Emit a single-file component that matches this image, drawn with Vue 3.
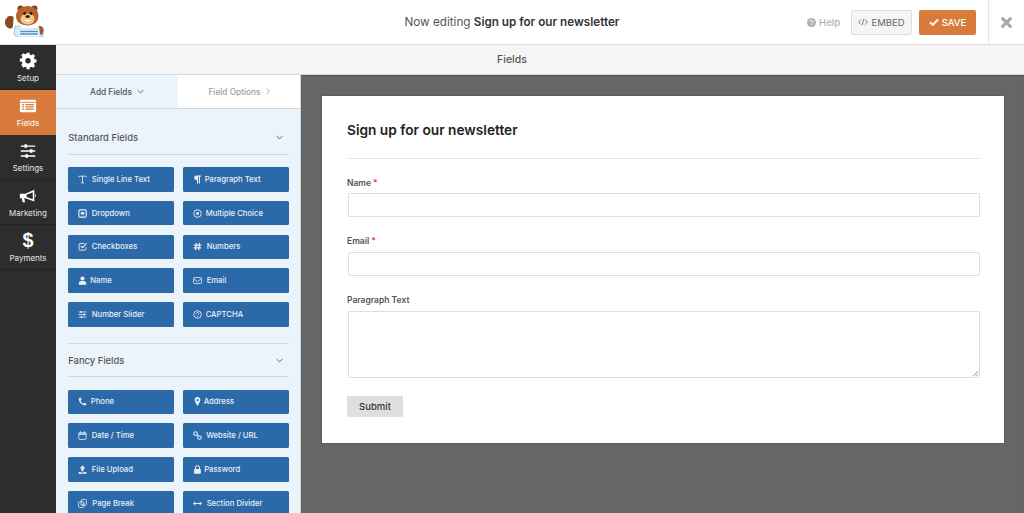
<script setup>
const navItems = [
  { label: 'Setup', icon: 'gear' },
  { label: 'Fields', icon: 'list', active: true },
  { label: 'Settings', icon: 'sliders' },
  { label: 'Marketing', icon: 'bullhorn' },
  { label: 'Payments', icon: 'dollar' },
];

const standardFields = [
  { label: 'Single Line Text', icon: 'text', nudge: 0 },
  { label: 'Paragraph Text', icon: 'para', nudge: -1.5 },
  { label: 'Dropdown', icon: 'dropdown', nudge: 0 },
  { label: 'Multiple Choice', icon: 'radio', nudge: -0.5 },
  { label: 'Checkboxes', icon: 'check', nudge: 0 },
  { label: 'Numbers', icon: 'hash', nudge: 0.5 },
  { label: 'Name', icon: 'user', nudge: -1.5 },
  { label: 'Email', icon: 'mail', nudge: 0.5 },
  { label: 'Number Slider', icon: 'slider', nudge: 0 },
  { label: 'CAPTCHA', icon: 'question', nudge: -0.5 },
];

const fancyFields = [
  { label: 'Phone', icon: 'phone', nudge: -1 },
  { label: 'Address', icon: 'pin', nudge: -2.5 },
  { label: 'Date / Time', icon: 'calendar', nudge: 0 },
  { label: 'Website / URL', icon: 'link', nudge: 0 },
  { label: 'File Upload', icon: 'upload', nudge: 0 },
  { label: 'Password', icon: 'lock', nudge: -2 },
  { label: 'Page Break', icon: 'copy', nudge: 0.5 },
  { label: 'Section Divider', icon: 'arrows', nudge: 0.5 },
];

const groups = [
  { title: 'Standard Fields', fields: standardFields },
  { title: 'Fancy Fields', fields: fancyFields },
];

const formFields = [
  { label: 'Name', required: true },
  { label: 'Email', required: true },
  { label: 'Paragraph Text', area: true },
];
</script>

<template>
  <div class="builder">
    <header class="topbar">
      <svg class="logo" viewBox="0 0 40 32" width="40" height="32">
        <path d="M10 21h24q4 0 4 3v8H13q-3 0-4-3z" fill="#d6e9f4" stroke="#9cc3da" stroke-width=".8" />
        <path d="M14 18h20l-2 5H17z" fill="#fff" />
        <rect x="14" y="25" width="20" height="6.500" fill="#f4fafd" />
        <path d="M15 26.500h18M15 29h18" stroke="#4a93cf" stroke-width="1.300" />
        <path d="M34 21c3 0 5 2 4.600 5-.3 2.500-2 4.500-3.600 3.500z" fill="#a5582a" />
        <circle cx="15.500" cy="3.500" r="3" fill="#7d4020" />
        <circle cx="29.500" cy="3.500" r="3" fill="#7d4020" />
        <path d="M11 11c0-6 5.500-10 11.500-10S33.500 5 33.500 11c0 6-4.500 9.500-11 9.500S11 17 11 11z" fill="#b8622c" />
        <ellipse cx="22.500" cy="14" rx="7" ry="5.500" fill="#f3c68e" />
        <circle cx="19.500" cy="8.500" r="1.400" fill="#2a1c14" />
        <circle cx="26" cy="8.500" r="1.400" fill="#2a1c14" />
        <ellipse cx="22.700" cy="11.500" rx="2.200" ry="1.500" fill="#3a2014" />
        <path d="M19.500 15q3.200 3 6.400 0z" fill="#fff" />
        <path d="M0 17c0-2 .8-4 1.800-3.500.5-2 1.500-2.500 2.500-2.200 1-1 2.500-.8 3 .2 1.200-.4 1.500 1 1.200 3L8 21c-.3 2-2 3.200-4 2.300S0 21 0 17z" fill="#8a4a22" />
      </svg>
      <p class="editing">Now editing <strong>Sign up for our newsletter</strong></p>
      <a class="help">
        <svg viewBox="0 0 16 16" width="9" height="9"><circle cx="8" cy="8" r="8" fill="currentColor" /><path d="M5.500 6.200c.2-3 5.200-3 5.200 0 0 2-2.500 1.800-2.500 3.400M8.200 11.200v1.600" fill="none" stroke="#fff" stroke-width="1.700" /></svg>
        Help
      </a>
      <button class="embed">
        <svg viewBox="0 0 16 12" width="10" height="8"><path d="M4.500 2 1 6l3.500 4M11.500 2 15 6l-3.500 4M9.500 1 6.500 11" fill="none" stroke="currentColor" stroke-width="1.300" /></svg>
        EMBED
      </button>
      <button class="save">
        <svg viewBox="0 0 16 12" width="10" height="8"><path d="M1.500 6.500 6 10.500 14.500 2" fill="none" stroke="currentColor" stroke-width="3" /></svg>
        SAVE
      </button>
      <div class="close">
        <svg viewBox="0 0 12 12" width="11" height="11"><path d="M1.800 1.800l8.400 8.400M10.200 1.800l-8.400 8.400" stroke="currentColor" stroke-width="3.200" stroke-linecap="round" /></svg>
      </div>
    </header>

    <div class="workspace">
      <nav class="sidenav">
        <a v-for="item in navItems" :key="item.label" class="nav-item" :class="{ active: item.active }">
          <svg viewBox="0 0 20 20" width="18" height="18" class="nav-icon">
            <template v-if="item.icon === 'gear'">
              <path d="M8.300 1h3.400l.5 2.500 1.700.7 2.200-1.400 2.400 2.400-1.400 2.200.7 1.700 2.500.5v3.400l-2.500.5-.7 1.700 1.400 2.200-2.400 2.400-2.200-1.400-1.700.7-.5 2.500H8.300l-.5-2.500-1.700-.7-2.200 1.400L1.500 16.300l1.400-2.200-.7-1.700L-.3 11.900V8.500l2.500-.5.700-1.700L1.500 4.100 3.900 1.700l2.200 1.400 1.700-.7z" transform="translate(1.200 -.2) scale(.9)" fill="currentColor" />
              <circle cx="10" cy="9.700" r="3" fill="#2d2d2d" />
            </template>
            <template v-else-if="item.icon === 'list'">
              <rect x="1" y="3" width="18" height="14" rx="1.500" fill="#fff" />
              <path d="M1.500 6h17" stroke="#d97b3c" stroke-width="1" />
              <path d="M3.500 8.500h2M7 8.500h9.500M3.500 11h2M7 11h9.500M3.500 13.500h2M7 13.500h9.500" stroke="#d97b3c" stroke-width="1.200" />
            </template>
            <template v-else-if="item.icon === 'sliders'">
              <path d="M2 4.500h16M2 10h16M2 15.500h16" stroke="currentColor" stroke-width="1.500" />
              <rect x="6" y="2.500" width="3" height="4" rx=".6" fill="currentColor" />
              <rect x="12" y="8" width="3" height="4" rx=".6" fill="currentColor" />
              <rect x="7" y="13.500" width="3" height="4" rx=".6" fill="currentColor" />
            </template>
            <template v-else-if="item.icon === 'bullhorn'">
              <path d="M1 7.500h6L17 3v13L7 12.500H5.800l1 4.500H4l-1-4.500H1z" fill="currentColor" />
              <path d="M15.300 5.800 8.500 8.500v2.600l6.800 2.600z" fill="#2d2d2d" />
              <path d="M18 7.500c1.200.5 1.200 3.500 0 4z" fill="currentColor" />
            </template>
            <template v-else>
              <text x="10" y="17" text-anchor="middle" class="dollar">$</text>
            </template>
          </svg>
          <span>{{ item.label }}</span>
        </a>
      </nav>

      <div class="main">
        <div class="subheader">Fields</div>
        <div class="content">
          <aside class="panel">
            <div class="tabs">
              <div class="tab current">
                Add Fields
                <svg viewBox="0 0 10 6" width="7" height="5"><path d="M1 1l4 4 4-4" fill="none" stroke="currentColor" stroke-width="1.300" /></svg>
              </div>
              <div class="tab">
                Field Options
                <svg viewBox="0 0 6 10" width="4" height="7"><path d="M1 1l4 4-4 4" fill="none" stroke="currentColor" stroke-width="1.300" /></svg>
              </div>
            </div>

            <section v-for="group in groups" :key="group.title" class="group">
              <div class="group-head">
                <span>{{ group.title }}</span>
                <svg viewBox="0 0 10 6" width="7" height="5"><path d="M1 1l4 4 4-4" fill="none" stroke="currentColor" stroke-width="1.300" /></svg>
              </div>
              <div class="field-grid">
                <button v-for="f in group.fields" :key="f.label" class="field-btn">
                  <svg viewBox="0 0 16 16" width="9" height="9" class="field-icon" :style="{ marginRight: f.nudge + 'px' }">
                    <path v-if="f.icon === 'text'" d="M2 2h12M8 2v12M5 14h6M1.500 2v2M14.500 2v2" fill="none" stroke="currentColor" stroke-width="1.500" />
                    <path v-else-if="f.icon === 'para'" d="M6 1h8v2h-1.500v12h-2V3H9v12H7V9H6a4 4 0 0 1 0-8z" fill="currentColor" />
                    <g v-else-if="f.icon === 'dropdown'">
                      <rect x="1.500" y="1.500" width="13" height="13" rx="2" fill="none" stroke="currentColor" stroke-width="2" />
                      <rect x="5" y="5.500" width="6" height="4.500" fill="currentColor" />
                    </g>
                    <g v-else-if="f.icon === 'radio'">
                      <circle cx="8" cy="8" r="6.700" fill="none" stroke="currentColor" stroke-width="1.600" />
                      <circle cx="8" cy="8" r="2.600" fill="currentColor" />
                    </g>
                    <g v-else-if="f.icon === 'check'">
                      <path d="M14 9v4a1.500 1.500 0 0 1-1.500 1.500h-9A1.500 1.500 0 0 1 2 13V4a1.500 1.500 0 0 1 1.500-1.500H11" fill="none" stroke="currentColor" stroke-width="1.600" />
                      <path d="M5 7l3 3 7-7.500" fill="none" stroke="currentColor" stroke-width="2" />
                    </g>
                    <path v-else-if="f.icon === 'hash'" d="M6 1.500 4.500 14.500M11.500 1.500 10 14.500M1.500 5.500h13.500M1 10.500h13.500" fill="none" stroke="currentColor" stroke-width="2.200" />
                    <g v-else-if="f.icon === 'user'">
                      <circle cx="8" cy="4.500" r="3.700" fill="currentColor" />
                      <path d="M1.500 15.500v-2.500c0-2.500 2-4 4-4h5c2 0 4 1.500 4 4v2.500z" fill="currentColor" />
                    </g>
                    <g v-else-if="f.icon === 'mail'">
                      <rect x="1" y="2.700" width="14" height="10.600" rx="1.300" fill="none" stroke="currentColor" stroke-width="1.400" />
                      <path d="M1.500 5 8 10l6.500-5" fill="none" stroke="currentColor" stroke-width="1.400" />
                    </g>
                    <g v-else-if="f.icon === 'slider'">
                      <path d="M1 3.500h14M1 8h14M1 12.500h14" stroke="currentColor" stroke-width="1.400" />
                      <rect x="4" y="1.700" width="2.400" height="3.600" fill="currentColor" />
                      <rect x="10" y="6.200" width="2.400" height="3.600" fill="currentColor" />
                      <rect x="5" y="10.700" width="2.400" height="3.600" fill="currentColor" />
                    </g>
                    <g v-else-if="f.icon === 'question'">
                      <circle cx="8" cy="8" r="6.700" fill="none" stroke="currentColor" stroke-width="1.500" />
                      <path d="M5.800 6.300c.2-2.600 4.600-2.600 4.600 0 0 1.700-2.300 1.500-2.300 3M8.100 10.500v1.700" fill="none" stroke="currentColor" stroke-width="1.500" />
                    </g>
                    <path v-else-if="f.icon === 'phone'" d="M4.500 1 1.500 2c-.5 7 5.500 13 12.500 12.500l1-3-3.500-1.500-1.500 2c-2.500-1-4.500-3-5.500-5.500l2-1.500z" fill="currentColor" />
                    <path v-else-if="f.icon === 'pin'" fill-rule="evenodd" d="M8 0a5.500 5.500 0 0 1 5 5.500C13 9 8 16 8 16S3 9 3 5.500A5 5.500 0 0 1 8 0zm0 3.500a2 2 0 1 0 0 4 2 2 0 0 0 0-4z" fill="currentColor" />
                    <g v-else-if="f.icon === 'calendar'">
                      <rect x="1.500" y="3" width="13" height="12" rx="1.300" fill="none" stroke="currentColor" stroke-width="1.400" />
                      <path d="M1.500 5.500h13" stroke="currentColor" stroke-width="2.400" />
                      <path d="M4.700.5v3M11.300.5v3" stroke="currentColor" stroke-width="1.600" />
                    </g>
                    <g v-else-if="f.icon === 'link'" fill="none" stroke="currentColor" stroke-width="1.800">
                      <circle cx="4.500" cy="4.500" r="3.200" />
                      <circle cx="11.500" cy="11.500" r="3.200" />
                      <path d="M6.500 6.500l3 3" />
                    </g>
                    <path v-else-if="f.icon === 'upload'" d="M8 .5 13 6h-3v5H6V6H3zM1 12.500h4v.8h6v-.8h4v3H1z" fill="currentColor" />
                    <g v-else-if="f.icon === 'lock'">
                      <rect x="2" y="7" width="12" height="8.500" rx="1.300" fill="currentColor" />
                      <path d="M4.500 7.500V5a3.500 3.500 0 0 1 7 0v2.500" fill="none" stroke="currentColor" stroke-width="1.800" />
                    </g>
                    <g v-else-if="f.icon === 'copy'" fill="none" stroke="currentColor" stroke-width="1.400">
                      <rect x="5.500" y="1" width="9.500" height="10" rx="1.500" />
                      <rect x="1" y="5" width="9.500" height="10" rx="1.500" />
                      <path d="M5.500 9.500l2 2 3.500-4" />
                    </g>
                    <path v-else d="M0 8l4-3.500v2.500h8V4.500L16 8l-4 3.500V9H4v2.500z" fill="currentColor" />
                  </svg>
                  {{ f.label }}
                </button>
              </div>
            </section>
          </aside>

          <div class="canvas">
            <form class="card" @submit.prevent>
              <h1>Sign up for our newsletter</h1>
              <div v-for="field in formFields" :key="field.label" class="form-row">
                <label>{{ field.label }}<em v-if="field.required">*</em></label>
                <div class="control" :class="{ area: field.area }">
                  <svg v-if="field.area" class="grip" viewBox="0 0 8 8" width="7" height="7"><path d="M1 7l6-6M4 7l3-3" stroke="#8d8d8d" stroke-width="1" /></svg>
                </div>
              </div>
              <button class="submit">Submit</button>
            </form>
          </div>
        </div>
      </div>
    </div>
  </div>
</template>

<style>
html, body { margin: 0; overflow: hidden; }
</style>

<style scoped>
.builder {
  width: 1024px;
  height: 513px;
  overflow: hidden;
  display: flex;
  flex-direction: column;
  font-family: Inter, "Liberation Sans", sans-serif;
  background: #fff;
}
.topbar {
  height: 44px;
  flex: none;
  display: flex;
  align-items: center;
  position: relative;
  border-bottom: 1px solid #dcdcdc;
  padding-left: 5px;
  box-sizing: content-box;
}
.logo { flex: none; margin-top: -2px; }
.editing {
  position: absolute;
  left: 0;
  right: 0;
  margin: 0;
  text-align: center;
  font-size: 11.700px;
  color: #555;
  pointer-events: none;
}
.editing strong { font-weight: 600; color: #333; }
.help {
  margin-left: auto;
  display: flex;
  align-items: center;
  gap: 3px;
  font-size: 9.500px;
  color: #b0b0b0;
  font-weight: 500;
}
button { font-family: inherit; border: 0; padding: 0; }
.embed {
  margin-left: 11px;
  width: 61px;
  height: 25px;
  display: flex;
  align-items: center;
  justify-content: center;
  gap: 3px;
  font-size: 9.500px;
  color: #666;
  background: #f5f5f5;
  border: 1px solid #ddd;
  border-radius: 2px;
  box-sizing: border-box;
}
.save {
  margin-left: 7px;
  width: 57px;
  height: 25px;
  display: flex;
  align-items: center;
  justify-content: center;
  gap: 3px;
  font-size: 9.500px;
  font-weight: 500;
  color: #fff;
  background: #d97b3c;
  border-radius: 2px;
}
.close {
  margin-left: 12px;
  width: 36px;
  height: 44px;
  flex: none;
  display: flex;
  align-items: center;
  justify-content: center;
  color: #a6a6a6;
  border-left: 1px solid #e4e4e4;
  box-sizing: border-box;
}
.workspace {
  flex: 1;
  display: flex;
  min-height: 0;
}
.sidenav {
  width: 56px;
  flex: none;
  background: #2d2d2d;
  position: relative;
  z-index: 1;
}
.nav-item {
  height: 45px;
  box-sizing: border-box;
  display: flex;
  flex-direction: column;
  align-items: center;
  padding-top: 7px;
  gap: 3px;
  font-size: 8px;
  color: #e6e6e6;
  border-bottom: 1px solid #222;
}
.nav-item.active {
  background: #d97b3c;
  color: #fff;
  border-bottom-color: #d97b3c;
}
.nav-icon { color: #fff; flex: none; overflow: visible; }
.dollar {
  font-size: 22px;
  fill: #fff;
  font-family: "Liberation Sans", sans-serif;
  font-weight: 700;
}
.main {
  flex: 1;
  min-width: 0;
  display: flex;
  flex-direction: column;
}
.subheader {
  height: 30px;
  flex: none;
  box-sizing: border-box;
  background: #f5f5f5;
  border-bottom: 1px solid #d8d8d8;
  display: flex;
  align-items: center;
  justify-content: center;
  font-size: 10.500px;
  font-weight: 500;
  color: #555;
  margin-left: -56px;
}
.content {
  flex: 1;
  min-height: 0;
  display: flex;
}
.panel {
  width: 245px;
  flex: none;
  background: #ebf3fb;
  border-right: 1px solid #cfd6de;
  box-sizing: border-box;
  overflow: hidden;
}
.tabs {
  display: grid;
  grid-template-columns: 122px 1fr;
  height: 34px;
  box-sizing: border-box;
  border-bottom: 1px solid #ced6de;
}
.tab {
  display: flex;
  align-items: center;
  justify-content: center;
  gap: 5px;
  font-size: 8.300px;
  font-weight: 500;
  color: #a0a0a0;
  background: #fff;
}
.tab.current {
  color: #555;
  background: #ebf3fb;
}
.group {
  margin: 0 11.500px 0 12.300px;
  padding-bottom: 16.500px;
}
.group + .group { border-top: 1px solid #d3dbe4; }
.group-head {
  height: 45.500px;
  box-sizing: border-box;
  display: flex;
  align-items: center;
  justify-content: space-between;
  padding: 13px 6px 0 0;
  font-size: 9.400px;
  font-weight: 500;
  color: #555;
  border-bottom: 1px solid #ced6de;
}
.group + .group .group-head {
  height: 33px;
  padding-top: 0;
}
.field-grid {
  display: grid;
  grid-template-columns: 1fr 1fr;
  gap: 9.250px 8.500px;
  margin-top: 12.500px;
}
.field-btn {
  height: 24.500px;
  display: flex;
  align-items: center;
  gap: 4.500px;
  padding-left: 10px;
  font-size: 7.700px;
  font-weight: 500;
  color: #e8eff7;
  background: #2c69a9;
  border-radius: 1.500px;
  white-space: nowrap;
}
.field-icon { flex: none; }
.canvas {
  flex: 1;
  min-width: 0;
  background: #666;
  padding: 21px 20px 0 21px;
  box-sizing: border-box;
  box-shadow: inset 0 1px 1px #555;
}
.card {
  height: 347px;
  box-sizing: border-box;
  background: #fff;
  padding: 0 24px 0 25px;
  box-shadow: 0 0 1px rgba(0, 0, 0, 0.5);
}
h1 {
  margin: 0;
  height: 63px;
  box-sizing: border-box;
  padding-top: 25px;
  font-size: 13.700px;
  line-height: 18px;
  font-weight: 600;
  color: #222;
  border-bottom: 1px solid #e6e6e6;
}
.form-row { margin-top: 19px; }
label {
  display: block;
  height: 16px;
  font-size: 8.500px;
  line-height: 10px;
  font-weight: 600;
  color: #555;
}
.form-row:first-of-type label { height: 15px; }
label em {
  font-style: normal;
  margin-left: 2px;
  color: #e53935;
}
.control {
  height: 24px;
  margin-left: 1px;
  box-sizing: border-box;
  border: 1px solid #ddd;
  border-radius: 1.500px;
  position: relative;
}
.control.area { height: 67px; }
.grip {
  position: absolute;
  right: 0;
  bottom: 0;
}
.submit {
  display: block;
  margin-top: 18px;
  width: 56px;
  height: 21px;
  font-size: 9.500px;
  font-weight: 500;
  color: #333;
  background: #dfdfdf;
  border-radius: 1px;
}
</style>
